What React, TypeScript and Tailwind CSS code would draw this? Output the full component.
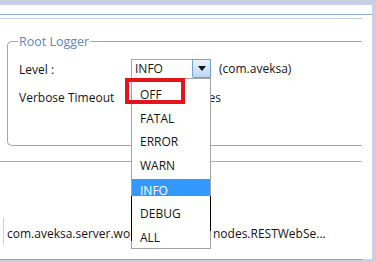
const levels = ["OFF", "FATAL", "ERROR", "WARN", "INFO", "DEBUG", "ALL"];

const font = { fontFamily: '"Open Sans", "Noto Sans", Arial, sans-serif' };

const LevelSelect = () => {
  return (
    <div className="relative w-[80px] h-[20px] border border-[#a7a7a7] bg-white flex items-center">
      <span className="pl-[3px] text-[12px] text-[#141414] flex-1">INFO</span>
      <div className="w-[19px] h-[19px] -mr-px -mt-px border border-[#6f9fd3] rounded-[2px] bg-gradient-to-b from-[#eaf3fc] to-[#bcd7f1] flex items-center justify-center self-start">
        <svg width="8" height="5" viewBox="0 0 8 5">
          <path d="M0 0 L8 0 L4 5 Z" fill="#111" />
        </svg>
      </div>

      <div className="absolute left-[-1px] top-[18px] w-[80px] h-[171px] border border-[#a3a3a3] bg-white pt-[4px] z-20">
        {levels.map((lv) =>
          lv === "INFO" ? (
            <div key={lv} className="h-[23.7px]">
              <div className="h-[17px] mt-[1px] bg-[#3399ff] text-white text-[12px] leading-[23px] pl-[8px] overflow-hidden">
                {lv}
              </div>
            </div>
          ) : (
            <div key={lv} className="h-[23.7px] text-[12px] leading-[23.7px] text-[#141414] pl-[8px]">
              {lv}
            </div>
          )
        )}
        <div className="absolute left-[-1px] top-[117px] w-px h-[45px] bg-black" />
        <div className="absolute right-[-1px] top-[117px] w-px h-[35px] bg-black" />
      </div>

      <div className="absolute left-[-7px] top-[18px] w-[60px] h-[26px] border-4 border-[#e3141b] z-30" />
    </div>
  );
};

export default function App() {
  return (
    <div className="w-[376px] h-[262px] bg-[#c6d0e2] overflow-hidden flex flex-col pt-[5px]" style={font}>
      <div className="w-[372px] h-[254px] bg-white flex flex-col">
        <div className="h-[9px]" />
        <div className="h-px bg-[#8eaad6]" />
        <div className="h-[3px]" />
        <div className="h-px w-[362px] bg-[#bccde8]" />

        <fieldset className="mt-[14px] ml-[7px] w-[355px] border-l border-t border-b border-[#a5a5a5] rounded-l-[5px] pl-[11px] pb-[37px]">
          <legend className="-ml-[1px] px-[1px] text-[12.5px] leading-[17px] text-[#6585bd]">Root Logger</legend>
          <div className="mt-[9px] flex items-center h-[20px] text-[12px] text-[#141414]">
            <span className="w-[112px] pt-[2px]">Level :</span>
            <LevelSelect />
            <span className="ml-[8px]">(com.aveksa)</span>
          </div>
          <div className="mt-[9px] flex items-center h-[20px] text-[12px] text-[#141414]">
            <span className="w-[112px]">Verbose Timeout</span>
            <span className="w-[90px] text-right">minutes</span>
          </div>
        </fieldset>

        <div className="mt-[15px] h-px w-[362px] bg-[#acacac]" />

        <div className="mt-[56px] ml-[3px] h-[27px] border-l border-[#cfcfcf] pl-[3px] flex items-center pt-[5px] text-[12px] text-[#141414] whitespace-nowrap">
          <span>com.aveksa.server.workflow.engine.</span>
          <span className="ml-[4px]">nodes.RESTWebSe...</span>
        </div>
      </div>
      <div className="h-px w-[362px] bg-[#9aa3b3]" />
    </div>
  );
}
